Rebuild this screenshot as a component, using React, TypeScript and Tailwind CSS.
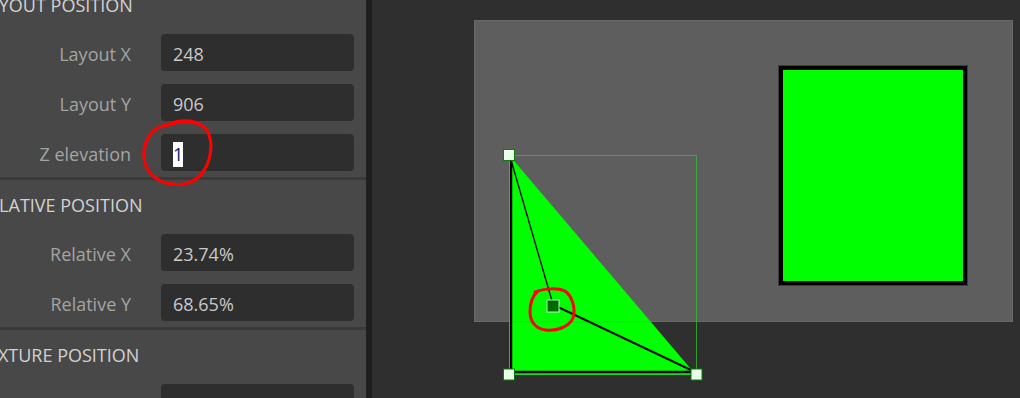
import React from "react"

type Row = { label: string; value?: string; selected?: boolean }

const sections: { title: string; rows: Row[] }[] = [
  {
    title: "Layout Position",
    rows: [
      { label: "Layout X", value: "248" },
      { label: "Layout Y", value: "906" },
      { label: "Z elevation", value: "1", selected: true },
    ],
  },
  {
    title: "Relative Position",
    rows: [
      { label: "Relative X", value: "23.74%" },
      { label: "Relative Y", value: "68.65%" },
    ],
  },
  {
    title: "Texture Position",
    rows: [{ label: "", value: "" }],
  },
]

function Field({ row }: { row: Row }) {
  return (
    <div className="flex items-center gap-[30px]">
      <div className="w-[131px] text-right text-[18px] leading-[24px] text-[#a4a4a4] pt-[3px]">
        {row.label}
      </div>
      <div className="w-[193px] h-[37px] rounded-[4px] bg-[#2e2e2e] flex items-center pl-[12px] pt-[3px] text-[18px] leading-[24px] text-[#c9c9c9]">
        {row.selected ? (
          <span className="bg-white text-[#0a1a6a] leading-[25px]">{row.value}</span>
        ) : (
          row.value
        )}
      </div>
    </div>
  )
}

function Panel() {
  return (
    <div className="w-[366px] h-full bg-[#484848] overflow-hidden shrink-0">
      <div className="-mt-[23px] flex flex-col">
        {sections.map((s) => (
          <div key={s.title} className="border-t-[3px] border-[#3a3a3a] pb-[6px]">
            <div className="h-[54px] pt-[13px] leading-[24px] text-[18px] uppercase text-[#d2d2d2] -ml-[22px] whitespace-nowrap">
              {s.title}
            </div>
            <div className="flex flex-col gap-[13px]">
              {s.rows.map((r, i) => (
                <Field key={i} row={r} />
              ))}
            </div>
          </div>
        ))}
      </div>
    </div>
  )
}

function Handle({ x, y, size = 11, dark = false }: { x: number; y: number; size?: number; dark?: boolean }) {
  return (
    <rect
      x={x - size / 2}
      y={y - size / 2}
      width={size}
      height={size}
      fill={dark ? "#006a00" : "#e8ffe8"}
      stroke={dark ? "#b8f5b8" : "#0d7a0d"}
      strokeWidth={1}
    />
  )
}

function Canvas() {
  return (
    <div className="relative flex-1 h-full bg-[#2f2f2f] border-l-[6px] border-[#1f1f1f]">
      {/* gray stage */}
      <div className="absolute left-[102px] top-[20px] w-[539px] h-[302px] bg-[#5e5e5e] border border-[#6a6a6a]" />
      {/* green rectangle */}
      <div className="absolute left-[407px] top-[66px] w-[188px] h-[219px] bg-[#00ff00] border-[4px] border-black outline outline-1 outline-[#3d3d3d]" />
      {/* selected triangle */}
      <svg className="absolute inset-0" width={648} height={398} viewBox="372 0 648 398">
        <polygon points="509,155 509,375 696,375" fill="#00ff00" />
        <line x1={509} y1={322} x2={650} y2={322} stroke="#000" strokeOpacity={0.08} strokeWidth={1} />
        <polyline points="511,158 511,372 694,372" fill="none" stroke="#000" strokeWidth={2.5} />
        <line x1={511} y1={160} x2={552} y2={301} stroke="#0a0a0a" strokeWidth={1.4} />
        <line x1={558} y1={307} x2={693} y2={371} stroke="#0a0a0a" strokeWidth={2} />
        <rect x={509.5} y={155.5} width={187} height={219} fill="none" stroke="#2fc42f" strokeOpacity={0.75} strokeWidth={1} />
        <Handle x={509} y={155} />
        <Handle x={509} y={374.5} />
        <Handle x={696.5} y={374.5} />
        <Handle x={553} y={306} size={12} dark />
      </svg>
    </div>
  )
}

export default function App() {
  return (
    <div
      className="relative w-[1020px] h-[398px] overflow-hidden flex"
      style={{ fontFamily: '"Open Sans", "Noto Sans", sans-serif' }}
    >
      <Panel />
      <Canvas />
      {/* red annotation marks */}
      <svg className="absolute inset-0 pointer-events-none" width={1020} height={398} viewBox="0 0 1020 398">
        <path
          d="M166 126 C180 118 200 119 208 132 C214 145 210 162 203 172 C196 182 184 186 172 184 C156 182 145 172 144 157 C143 143 150 131 160 127 C170 123 184 121 196 123"
          fill="none"
          stroke="#ff0000"
          strokeWidth={3.2}
          strokeLinecap="round"
        />
        <path
          d="M535 292 C545 288 558 288 565 291 C572 296 576 308 573 318 C569 327 557 331 546 330 C536 329 530 322 530 312 C530 303 532 296 538 291"
          fill="none"
          stroke="#ff0000"
          strokeWidth={3}
          strokeLinecap="round"
        />
      </svg>
    </div>
  )
}
